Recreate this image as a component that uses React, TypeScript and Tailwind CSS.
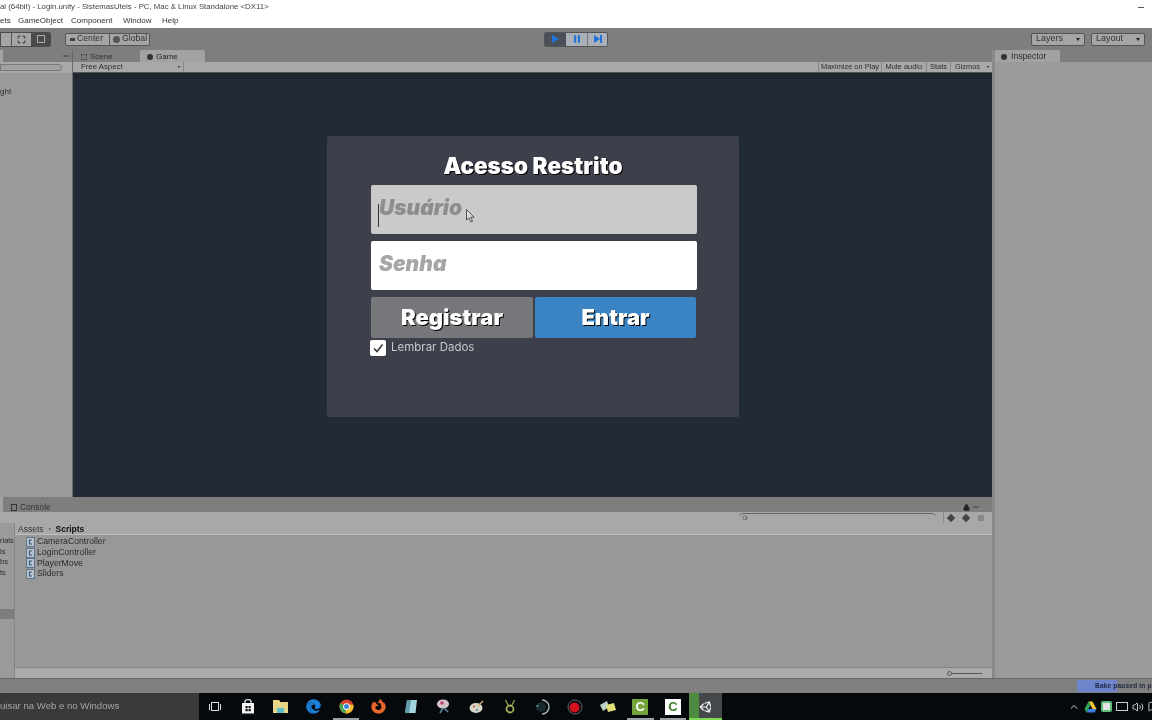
import { ChevronUp, Pause, Volume2, MessageSquare, Search, Lock, Maximize } from "lucide-react";
import { FaEdge, FaFirefoxBrowser, FaUnity } from "react-icons/fa";

const scripts = ["CameraController", "LoginController", "PlayerMove", "Sliders"];

function ScriptIcon() {
    return (
        <svg width="9" height="10" viewBox="0 0 9 10" className="shrink-0">
            <rect x="0.5" y="0.5" width="8" height="9" fill="#b7c4d0" stroke="#5f7488" />
            <path d="M6 3H3.5V7H6" fill="none" stroke="#37597a" strokeWidth="1.2" />
        </svg>
    );
}

function ChromeIcon() {
    return (
        <svg width="15" height="15" viewBox="0 0 16 16">
            <circle cx="8" cy="8" r="7.5" fill="#d8402f" />
            <path d="M8 8 1.5 4.2A7.5 7.5 0 0 0 7 15.4Z" fill="#4aa64f" />
            <path d="M8 8 7 15.4A7.5 7.5 0 0 0 15.2 6H8Z" fill="#f2c230" />
            <circle cx="8" cy="8" r="3.6" fill="#fff" />
            <circle cx="8" cy="8" r="2.7" fill="#3f86d8" />
        </svg>
    );
}

function TaskIcon({ children, line, active }: { children: React.ReactNode; line?: boolean; active?: boolean }) {
    return (
        <div className={`relative flex h-full w-[32.7px] shrink-0 items-center justify-center ${active ? "bg-[#45484b]" : ""}`}>
            {active && <div className="absolute inset-y-0 left-0 w-[10px] bg-[#4f8a42]" />}
            <div className="relative flex items-center justify-center">{children}</div>
            {line && <div className="absolute bottom-0 left-[3px] right-[3px] h-[2px] bg-[#9aa0a3]" />}
            {active && <div className="absolute bottom-0 left-0 right-0 h-[2px] bg-[#7ed957]" />}
        </div>
    );
}

export default function App() {
    return (
        <div className="flex h-[720px] w-[1152px] flex-col overflow-hidden bg-[#808080] font-['Liberation_Sans',sans-serif] text-[#222] blur-[0.3px]">
            {/* window title and menu */}
            <div className="h-[28px] shrink-0 bg-white">
                <div className="flex h-[14px] items-center justify-between pr-[8px] text-[7.8px] text-[#444]">
                    <span className="whitespace-nowrap">al (64bit) - Login.unity - SistemasUteis - PC, Mac &amp; Linux Standalone &lt;DX11&gt;</span>
                    <div className="h-[1px] w-[6px] bg-[#555]" />
                </div>
                <div className="flex h-[14px] items-center text-[8px] text-[#333]">
                    <span className="w-[18px]">ets</span>
                    <span className="w-[53px]">GameObject</span>
                    <span className="w-[52px]">Component</span>
                    <span className="w-[39px]">Window</span>
                    <span>Help</span>
                </div>
            </div>

            {/* toolbar */}
            <div className="flex h-[22px] shrink-0 items-center bg-[#7e7e7e]">
                <div className="flex flex-1 items-center pr-[7px]">
                    <div className="flex h-[15px] w-[51px] overflow-hidden rounded-r-[2px] border border-[#4d4d4d]">
                        <div className="w-[10px] bg-[#a5a5a5]" />
                        <div className="flex w-[20px] items-center justify-center border-l border-[#555] bg-[#a5a5a5]">
                            <Maximize size={9} stroke="#222" strokeWidth={2.5} />
                        </div>
                        <div className="flex flex-1 items-center justify-center bg-[#4a4a4a]">
                            <div className="h-[8px] w-[8px] border border-[#aaa]" />
                        </div>
                    </div>
                    <div className="ml-[14px] flex h-[13px] w-[85px] overflow-hidden rounded-[2px] border border-[#555] text-[8.7px] text-[#333]">
                        <div className="flex w-[43px] items-center gap-[2px] bg-[#a5a5a5] pl-[4px]">
                            <div className="h-[3px] w-[5px] bg-[#444]" />
                            Center
                        </div>
                        <div className="flex flex-1 items-center gap-[2px] border-l border-[#555] bg-[#a5a5a5] pl-[3px]">
                            <div className="h-[7px] w-[7px] rounded-full bg-[#555]" />
                            Global
                        </div>
                    </div>
                </div>
                <div className="flex h-[15px] w-[64px] overflow-hidden rounded-[2px] border border-[#555]">
                    <div className="flex w-[21px] items-center justify-center bg-[#4b5058]">
                        <div className="h-0 w-0 border-y-[4px] border-l-[7px] border-y-transparent border-l-[#1d76d8]" />
                    </div>
                    <div className="flex w-[21px] items-center justify-center bg-[#a9b0b8]">
                        <Pause size={10} strokeWidth={0} fill="#1e72d8" />
                    </div>
                    <div className="flex flex-1 items-center justify-center border-l border-[#777] bg-[#a9b0b8]">
                        <div className="h-0 w-0 border-y-[4px] border-l-[6px] border-y-transparent border-l-[#1e72d8]" />
                        <div className="h-[8px] w-[2px] bg-[#1e72d8]" />
                    </div>
                </div>
                <div className="flex flex-1 items-center justify-end gap-[6px] pr-[7px]">
                    <div className="flex h-[13px] w-[54px] items-center justify-between rounded-[2px] border border-[#555] bg-[#a5a5a5] px-[4px] text-[9px] text-[#333]">
                        Layers
                        <div className="h-0 w-0 border-x-[2px] border-t-[3px] border-x-transparent border-t-[#222]" />
                    </div>
                    <div className="flex h-[13px] w-[54px] items-center justify-between rounded-[2px] border border-[#555] bg-[#a5a5a5] px-[4px] text-[9px] text-[#333]">
                        Layout
                        <div className="h-0 w-0 border-x-[2px] border-t-[3px] border-x-transparent border-t-[#222]" />
                    </div>
                </div>
            </div>

            {/* editor panels */}
            <div className="flex h-[628px] shrink-0">
                <div className="flex w-[992px] flex-col">
                    <div className="flex h-[447px] shrink-0">
                        {/* hierarchy */}
                        <div className="flex w-[73px] shrink-0 flex-col border-r border-[#6a6a6a] bg-[#9a9a9a]">
                            <div className="flex h-[12px] items-center justify-between bg-[#7e7e7e] pr-[3px]">
                                <div className="h-full w-[3px] bg-[#a2a2a2]" />
                                <div className="h-[2px] w-[6px] bg-[#5f5f5f]" />
                            </div>
                            <div className="flex h-[11px] items-center bg-[#a8a8a8]">
                                <div className="h-[7px] w-[62px] rounded-r-[3px] border border-[#777] bg-[#a2a2a2]" />
                            </div>
                            <span className="mt-[13px] text-[8px] text-[#2a2a2a]">ght</span>
                        </div>
                        {/* game */}
                        <div className="flex flex-1 flex-col">
                            <div className="flex h-[12px] shrink-0 items-end bg-[#7e7e7e] pl-[5px] text-[8px] text-[#333]">
                                <div className="flex h-[12px] w-[62px] items-center gap-[3px] pt-[1px] pl-[3px]">
                                    <div className="h-[6px] w-[6px] border border-dotted border-[#444]" />
                                    Scene
                                </div>
                                <div className="flex h-[12px] w-[65px] items-center gap-[3px] rounded-t-[2px] bg-[#a2a2a2] pt-[1px] pl-[7px] text-[#222]">
                                    <div className="h-[6px] w-[6px] rounded-full bg-[#333]" />
                                    Game
                                </div>
                            </div>
                            <div className="flex h-[11px] shrink-0 items-center justify-between border-b border-[#555] bg-[#a8a8a8] text-[7.4px] text-[#2c2c2c]">
                                <div className="flex h-full w-[111px] items-center justify-between border-r border-[#8a8a8a] pl-[8px] pr-[3px] text-[7.8px]">
                                    Free Aspect
                                    <div className="h-0 w-0 border-x-[1.5px] border-t-[2px] border-x-transparent border-t-[#222]" />
                                </div>
                                <div className="flex h-full items-center">
                                    <span className="flex h-full items-center border-x border-[#8a8a8a] px-[2px]">Maximize on Play</span>
                                    <span className="flex h-full items-center border-r border-[#8a8a8a] px-[3.5px]">Mute audio</span>
                                    <span className="flex h-full items-center border-r border-[#8a8a8a] px-[3.5px]">Stats</span>
                                    <span className="flex h-full items-center gap-[7px] pl-[3.5px] pr-[3px]">
                                        Gizmos
                                        <div className="h-0 w-0 border-x-[1.5px] border-t-[2px] border-x-transparent border-t-[#222]" />
                                    </span>
                                </div>
                            </div>

                            <div className="flex flex-1 justify-center border-t-[6px] border-[#1f252e] bg-[#232a37] pt-[57px] pl-[1px] font-['Inter',sans-serif]">
                                <div className="flex h-[281px] w-[412px] flex-col items-center rounded-[2px] bg-[#3d404b] pr-[42px] pl-[44px]">
                                    <h1 className="mt-[16px] -ml-[2px] h-[28px] whitespace-nowrap text-[22.5px] leading-[28px] font-black text-white [text-shadow:1px_1px_0_#000]">
                                        Acesso Restrito
                                    </h1>
                                    <div className="relative mt-[5px] flex h-[49px] w-[326px] shrink-0 items-center rounded-[2px] bg-[#cacaca] pb-[3px] pl-[8px] text-[21px] font-black text-[#8d8d8d] italic">
                                        Usuário
                                        <div className="absolute top-[19px] left-[7px] h-[23px] w-[1px] bg-[#333]" />
                                        <svg width="9" height="14" viewBox="0 0 9 14" className="absolute top-[24px] left-[95px]">
                                            <path d="M0.5 0.5V11L3 8.8 4.7 13 6.5 12.2 4.8 8.2H8Z" fill="#ddd" stroke="#333" strokeWidth="0.8" />
                                        </svg>
                                    </div>
                                    <div className="mt-[7px] flex h-[49px] w-[326px] shrink-0 items-center rounded-[2px] bg-white pb-[3px] pl-[8px] text-[21px] font-black text-[#a6a6a6] italic">
                                        Senha
                                    </div>
                                    <div className="mt-[7px] flex w-[326px] shrink-0 justify-between pr-[1px]">
                                        <div className="flex h-[41px] w-[162px] items-center justify-center rounded-[2px] bg-[#76777b] text-[22px] font-black text-white [text-shadow:1px_1px_0_#000]">
                                            Registrar
                                        </div>
                                        <div className="flex h-[41px] w-[161px] items-center justify-center rounded-[2px] bg-[#3a84c4] text-[22px] font-black text-white [text-shadow:1px_1px_0_#000]">
                                            Entrar
                                        </div>
                                    </div>
                                    <div className="mt-[1px] flex w-[326px] shrink-0 items-center gap-[4px] text-[11.5px] text-[#c8c8c8]">
                                        <div className="flex h-[16px] w-[16px] -translate-x-[1px] items-center justify-center rounded-[2px] bg-white">
                                            <svg width="12" height="12" viewBox="0 0 12 12">
                                                <path d="M2 6.5 5 9.5 10.5 2.5" fill="none" stroke="#333" strokeWidth="1.5" />
                                            </svg>
                                        </div>
                                        Lembrar Dados
                                    </div>
                                </div>
                            </div>
                        </div>
                    </div>

                    {/* project panel */}
                    <div className="flex h-[15px] shrink-0 items-center justify-between bg-[#7e7e7e] pr-[13px] text-[8px] text-[#333]">
                        <div className="flex h-full items-center">
                            <div className="h-full w-[3px] bg-[#a2a2a2]" />
                            <div className="mt-[5px] ml-[8px] h-[7px] w-[6px] border border-[#333]" />
                            <span className="mt-[5px] ml-[3px] text-[8.4px]">Console</span>
                        </div>
                        <div className="mt-[5px] flex items-center gap-[3px]">
                            <Lock size={7} fill="#222" stroke="#222" />
                            <div className="h-[2px] w-[6px] bg-[#5f5f5f]" />
                        </div>
                    </div>
                    <div className="flex h-[11px] shrink-0 items-center justify-end bg-[#a8a8a8] pr-[8px]">
                        <div className="flex h-[9px] w-[197px] items-center rounded-full border-t border-[#666] pl-[3px]">
                            <Search size={6} stroke="#444" />
                        </div>
                        <div className="ml-[7px] flex h-full items-center gap-[9px] border-l border-[#8a8a8a] pl-[4px]">
                            <div className="h-[6px] w-[6px] rotate-45 bg-[#444]" />
                            <div className="h-[6px] w-[6px] -rotate-45 bg-[#444]" />
                            <div className="h-[6px] w-[6px] bg-[#888]" />
                        </div>
                    </div>
                    <div className="flex flex-1">
                        <div className="flex w-[15px] shrink-0 flex-col border-r border-[#858585] bg-[#9a9a9a] text-[7.5px] leading-[10.7px] text-[#2c2c2c]">
                            <div className="mt-[13px] h-[43px]">
                                <div>rials</div>
                                <div>ls</div>
                                <div>bs</div>
                                <div>ts</div>
                            </div>
                            <div className="mt-[30px] h-[10px] bg-[#7c7c7c]" />
                        </div>
                        <div className="flex flex-1 flex-col bg-[#989898]">
                            <div className="flex h-[12px] shrink-0 items-center gap-[5px] border-b border-[#bdbdbd] bg-[#a8a8a8] pt-[1px] pl-[3px] text-[8.5px] text-[#333]">
                                Assets
                                <div className="h-0 w-0 border-y-[1.5px] border-l-[2px] border-y-transparent border-l-[#444]" />
                                <span className="font-bold text-[#111]">Scripts</span>
                            </div>
                            <div className="flex flex-1 flex-col gap-[0.6px] pt-[2px] pl-[11px] text-[8.7px] text-[#2c2c2c]">
                                {scripts.map((name) => (
                                    <div key={name} className="flex h-[10px] items-center gap-[2px]">
                                        <ScriptIcon />
                                        {name}
                                    </div>
                                ))}
                            </div>
                            <div className="flex h-[11px] shrink-0 items-center justify-end border-t border-[#858585] bg-[#aaaaaa] pr-[10px]">
                                <div className="h-[5px] w-[5px] rounded-full border border-[#555]" />
                                <div className="h-[1px] w-[30px] bg-[#555]" />
                            </div>
                        </div>
                    </div>
                </div>
                {/* inspector */}
                <div className="flex flex-1 flex-col border-l-[3px] border-[#8a8a8a] bg-[#9b9b9b]">
                    <div className="flex h-[12px] shrink-0 bg-[#7e7e7e]">
                        <div className="flex w-[65px] items-center gap-[4px] rounded-t-[2px] bg-[#a2a2a2] pt-[1px] pl-[6px] text-[8.6px] text-[#2c2c2c]">
                            <div className="h-[6px] w-[6px] rounded-full bg-[#333]" />
                            Inspector
                        </div>
                    </div>
                </div>
            </div>

            {/* status bar */}
            <div className="flex h-[15px] shrink-0 items-start justify-end border-t border-[#666] bg-[#808080] pt-[1px]">
                <div className="relative h-[12px] w-[75px] overflow-hidden whitespace-nowrap text-[6.5px] leading-[12px] font-bold tracking-[0.2px] text-[#1d2540]">
                    <div className="absolute inset-y-0 left-0 w-[40px] bg-[#7084cc]" />
                    <span className="relative pl-[18px]">Bake paused in p</span>
                </div>
            </div>

            {/* taskbar */}
            <div className="flex h-[27px] shrink-0 bg-[#05090c]">
                <div className="flex w-[199px] shrink-0 items-center bg-[#3a3a3a] text-[9.6px] whitespace-nowrap text-[#a5a5a5]">
                    uisar na Web e no Windows
                </div>
                <TaskIcon>
                    <div className="flex items-center gap-[1px]">
                        <div className="h-[6px] w-[1px] bg-[#ddd]" />
                        <div className="h-[9px] w-[8px] border border-[#ddd]" />
                        <div className="h-[6px] w-[1px] bg-[#ddd]" />
                    </div>
                </TaskIcon>
                <TaskIcon>
                    <svg width="14" height="15" viewBox="0 0 14 15">
                        <path d="M1 4H13V14.5H1Z" fill="#f4f4f4" />
                        <path d="M4 4V2.5C4 0 10 0 10 2.5V4" fill="none" stroke="#f4f4f4" strokeWidth="1.2" />
                        <path d="M4.5 7H6.7V9.2H4.5ZM7.5 7H9.7V9.2H7.5ZM4.5 10H6.7V12.2H4.5ZM7.5 10H9.7V12.2H7.5Z" fill="#111" />
                    </svg>
                </TaskIcon>
                <TaskIcon>
                    <svg width="15" height="13" viewBox="0 0 15 13">
                        <path d="M0 0H6L7.5 2H15V13H0Z" fill="#ecd680" />
                        <path d="M0 4H15V13H0Z" fill="#e6d788" />
                        <path d="M4 8H11V13H4Z" fill="#5cc0c6" />
                    </svg>
                </TaskIcon>
                <TaskIcon>
                    <FaEdge size={15} color="#1c7fd6" />
                </TaskIcon>
                <TaskIcon line>
                    <ChromeIcon />
                </TaskIcon>
                <TaskIcon>
                    <FaFirefoxBrowser size={15} color="#e8672c" />
                </TaskIcon>
                <TaskIcon>
                    <svg width="14" height="15" viewBox="0 0 14 15">
                        <path d="M3 1H13L11.5 14H1Z" fill="#a4d4dc" />
                        <path d="M3 1H7L5 14H1Z" fill="#5e9aa8" />
                    </svg>
                </TaskIcon>
                <TaskIcon>
                    <svg width="16" height="15" viewBox="0 0 16 15">
                        <ellipse cx="7" cy="5" rx="6" ry="4.5" fill="#d4c4cc" />
                        <circle cx="6" cy="4" r="1.8" fill="#c04068" />
                        <path d="M7 9 4 14M8 9 12 13" stroke="#5a8aa0" strokeWidth="1.5" />
                    </svg>
                </TaskIcon>
                <TaskIcon>
                    <svg width="16" height="14" viewBox="0 0 16 14">
                        <ellipse cx="7" cy="8" rx="6.5" ry="5" fill="#d8d6c8" />
                        <circle cx="5" cy="6.5" r="1" fill="#b05030" />
                        <circle cx="8" cy="10" r="1" fill="#4f7a9a" />
                        <path d="M9 6 14 1" stroke="#c8b070" strokeWidth="1.5" />
                    </svg>
                </TaskIcon>
                <TaskIcon>
                    <svg width="12" height="16" viewBox="0 0 12 16">
                        <circle cx="6" cy="10" r="3.5" fill="none" stroke="#a3ad55" strokeWidth="1.8" />
                        <path d="M4 6 1.5 1M8 6 10.5 1" stroke="#a3ad55" strokeWidth="1.2" />
                    </svg>
                </TaskIcon>
                <TaskIcon>
                    <svg width="16" height="16" viewBox="0 0 16 16">
                        <path d="M8 1A7 7 0 0 1 8 15" fill="none" stroke="#a9b2b8" strokeWidth="1.5" />
                        <circle cx="7" cy="8" r="5" fill="#1b2a30" />
                        <circle cx="3.5" cy="7" r="1" fill="#5fb0a8" />
                    </svg>
                </TaskIcon>
                <TaskIcon>
                    <svg width="16" height="16" viewBox="0 0 16 16">
                        <circle cx="8" cy="8" r="7" fill="none" stroke="#666" />
                        <circle cx="7.5" cy="8.5" r="5" fill="#d41320" />
                    </svg>
                </TaskIcon>
                <TaskIcon>
                    <svg width="16" height="12" viewBox="0 0 16 12">
                        <path d="M0 4 7 0 9 6 3 10Z" fill="#bcd4c8" />
                        <path d="M6 4 14 2 16 9 8 11Z" fill="#e4df78" />
                    </svg>
                </TaskIcon>
                <TaskIcon line>
                    <div className="flex h-[16px] w-[16px] items-center justify-center bg-[#74a33c] text-[13px] font-bold text-white">C</div>
                </TaskIcon>
                <TaskIcon line>
                    <div className="flex h-[16px] w-[16px] items-center justify-center bg-white text-[13px] font-bold text-[#3d7c28]">C</div>
                </TaskIcon>
                <TaskIcon active>
                    <FaUnity size={14} color="#eee" />
                </TaskIcon>
                <div className="flex flex-1 items-center pl-[344px]">
                    <div className="flex w-[16px] shrink-0 justify-center">
                        <ChevronUp size={12} stroke="#ccc" />
                    </div>
                    <div className="flex w-[16px] shrink-0 justify-center">
                        <svg width="13" height="12" viewBox="0 0 13 12">
                            <path d="M4.5 0.5H8.5L12.5 8H8.5Z" fill="#f0c330" />
                            <path d="M4.5 0.5 0.5 8 2.5 11.5 6.5 4Z" fill="#2fa35a" />
                            <path d="M2.5 11.5H10.5L12.5 8H4.5Z" fill="#3f80e0" />
                        </svg>
                    </div>
                    <div className="flex w-[16px] shrink-0 justify-center">
                        <div className="h-[11px] w-[11px] rounded-[2px] border-2 border-[#5fbf7a] bg-[#e4e4e4]" />
                    </div>
                    <div className="flex w-[16px] shrink-0 justify-center">
                        <div className="h-[9px] w-[12px] border border-[#ccc]" />
                    </div>
                    <div className="flex w-[16px] shrink-0 justify-center">
                        <Volume2 size={12} stroke="#ccc" />
                    </div>
                    <div className="flex w-[14px] shrink-0 justify-center">
                        <MessageSquare size={11} stroke="#ccc" className="shrink-0" />
                    </div>
                </div>
            </div>
        </div>
    );
}
